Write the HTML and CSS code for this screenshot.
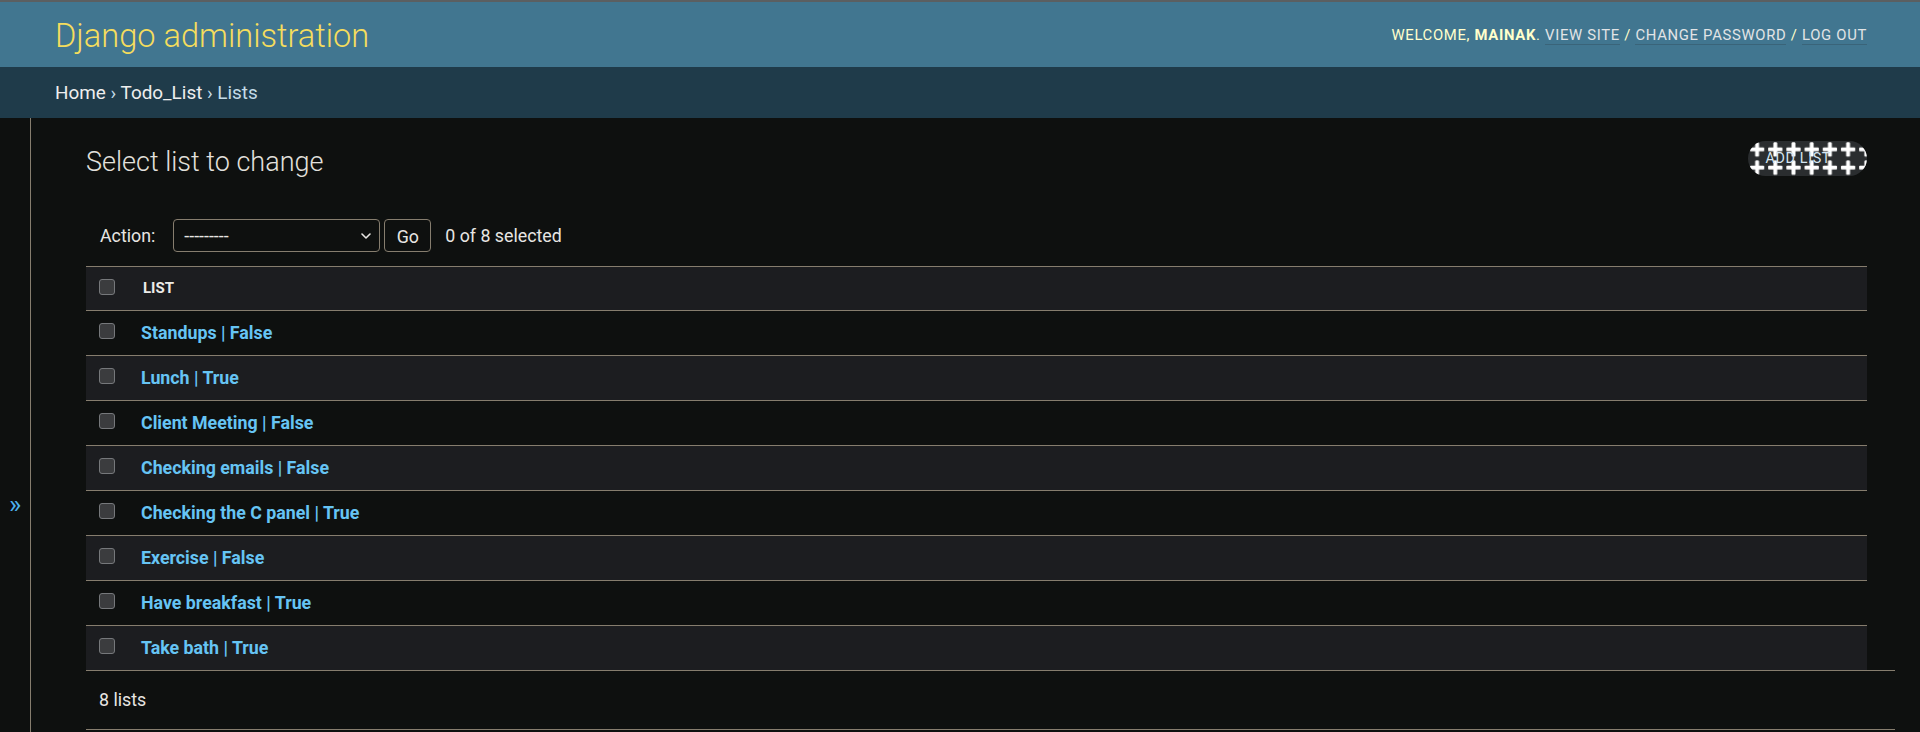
FILE: index.html
```html
<!DOCTYPE html>
<html lang="en">
<head>
<meta charset="utf-8">
<title>Select list to change | Django site admin</title>
<link rel="stylesheet" href="styles.css">
</head>
<body>
<div class="container">
  <header class="header">
    <h1 class="site-name"><a href="#">Django administration</a></h1>
    <div class="user-tools">Welcome, <strong>mainak</strong>. <a href="#">View site</a> / <a href="#">Change password</a> / <a href="#">Log out</a></div>
  </header>
  <nav class="breadcrumbs"><a href="#">Home</a> › <a href="#">Todo_List</a> › Lists</nav>
  <div class="main">
    <button class="toggle-nav" type="button" aria-label="Toggle navigation">»</button>
    <div class="content">
      <div class="page-head">
        <h1 class="page-title">Select list to change</h1>
        <a class="addlink" href="#">
          <svg class="addlink-bg" aria-hidden="true">
            <defs>
              <pattern id="addlink-plus" width="18.2" height="18.2" patternUnits="userSpaceOnUse">
                <path fill="#ffffff" transform="scale(0.0101563)" d="M1600 736v192q0 40-28 68t-68 28h-416v416q0 40-28 68t-68 28h-192q-40 0-68-28t-28-68v-416h-416q-40 0-68-28t-28-68v-192q0-40 28-68t68-28h416v-416q0-40 28-68t68-28h192q40 0 68 28t28 68v416h416q40 0 68 28t28 68z"/>
              </pattern>
            </defs>
            <rect width="100%" height="100%" fill="url(#addlink-plus)"/>
          </svg>
          <span class="addlink-text">Add list</span>
        </a>
      </div>
      <form class="changelist">
        <div class="actions">
          <label class="action-label" for="action">Action:</label>
          <div class="select-wrap">
            <select id="action" class="action-select">
              <option>---------</option>
            </select>
            <svg class="chevron" width="10" height="6" viewBox="0 0 10 6" aria-hidden="true"><path d="M1 1l4 4 4-4" fill="none" stroke="#e8e6e3" stroke-width="1.6" stroke-linecap="round" stroke-linejoin="round"/></svg>
          </div>
          <button class="go" type="button">Go</button>
          <span class="counter">0 of 8 selected</span>
        </div>
        <table class="results">
          <thead>
            <tr>
              <th class="check-cell"><input type="checkbox" class="check" aria-label="Select all"></th>
              <th class="col-head">List</th>
            </tr>
          </thead>
          <tbody>
            <tr><td class="check-cell"><input type="checkbox" class="check"></td><td class="item"><a href="#">Standups | False</a></td></tr>
            <tr><td class="check-cell"><input type="checkbox" class="check"></td><td class="item"><a href="#">Lunch | True</a></td></tr>
            <tr><td class="check-cell"><input type="checkbox" class="check"></td><td class="item"><a href="#">Client Meeting | False</a></td></tr>
            <tr><td class="check-cell"><input type="checkbox" class="check"></td><td class="item"><a href="#">Checking emails | False</a></td></tr>
            <tr><td class="check-cell"><input type="checkbox" class="check"></td><td class="item"><a href="#">Checking the C panel | True</a></td></tr>
            <tr><td class="check-cell"><input type="checkbox" class="check"></td><td class="item"><a href="#">Exercise | False</a></td></tr>
            <tr><td class="check-cell"><input type="checkbox" class="check"></td><td class="item"><a href="#">Have breakfast | True</a></td></tr>
            <tr><td class="check-cell"><input type="checkbox" class="check"></td><td class="item"><a href="#">Take bath | True</a></td></tr>
          </tbody>
        </table>
        <p class="paginator">8 lists</p>
      </form>
    </div>
  </div>
</div>
</body>
</html>
```
FILE: styles.css
```css
* {
  box-sizing: border-box;
}

html,
body {
  margin: 0;
  padding: 0;
}

body {
  background: #0e100f;
  color: #e8e6e3;
  font-family: Roboto, "Liberation Sans", Arial, sans-serif;
  font-size: 18.9px;
}

/* ---------- header ---------- */
.header {
  display: flex;
  justify-content: space-between;
  align-items: center;
  height: 67px;
  padding: 0 53px 0 55px;
  background: #417690;
  border-top: 2px solid #5b5f61;
}

.site-name {
  margin: 2px 0 0;
  font-size: 32.6px;
  font-weight: 300;
  line-height: normal;
}

.site-name a {
  color: #f5dd5d;
  text-decoration: none;
}

.user-tools {
  font-size: 14.85px;
  letter-spacing: 0.68px;
  text-transform: uppercase;
  color: #ffffcc;
}

.user-tools strong {
  font-weight: 700;
}

.user-tools a {
  color: #e1e4e6;
  text-decoration: none;
  border-bottom: 1px solid #3a6479;
}

/* ---------- breadcrumbs ---------- */
.breadcrumbs {
  padding: 15px 55px;
  line-height: 21px;
  background: #1f3b4a;
  color: #c4dce8;
  font-size: 18.9px;
}

.breadcrumbs a {
  color: #eeeeee;
  text-decoration: none;
}

/* ---------- main ---------- */
.main {
  display: flex;
  min-height: 772px;
}

.toggle-nav {
  flex: 0 0 31px;
  display: flex;
  align-items: center;
  justify-content: center;
  padding: 0;
  border: 0;
  border-right: 1px solid #867d6e;
  background: transparent;
  color: #4db2ee;
  font-family: Roboto, "Liberation Sans", Arial, sans-serif;
  font-size: 26px;
}

.content {
  flex: 1;
  min-width: 0;
  padding: 23px 53px 0 55px;
}

.page-head {
  display: flex;
  justify-content: space-between;
  align-items: flex-start;
}

.page-title {
  margin: 6px 0 0;
  font-size: 27px;
  font-weight: 300;
  line-height: 31px;
  color: #e2e0dd;
}

.addlink {
  position: relative;
  display: block;
  height: 35px;
  padding: 4px 36px 0 18px;
  line-height: 26px;
  border-radius: 18px;
  overflow: hidden;
  background: #2a2d2f;
  color: #d6e6f2;
  font-size: 14.3px;
  letter-spacing: 0.65px;
  text-transform: uppercase;
  text-decoration: none;
}

.addlink-bg {
  position: absolute;
  top: 0;
  left: 0;
  width: 100%;
  height: 100%;
}

.addlink-text {
  position: relative;
}

/* ---------- actions ---------- */
.actions {
  display: flex;
  align-items: center;
  height: 33px;
  margin: 41px 0 14px;
  padding-left: 14px;
  font-size: 17.8px;
  color: #e8e6e3;
}

.action-label {
  margin-right: 18px;
}

.select-wrap {
  position: relative;
  width: 207px;
  height: 33px;
}

.action-select {
  appearance: none;
  -webkit-appearance: none;
  width: 100%;
  height: 100%;
  margin: 0;
  padding: 0 28px 0 10px;
  border: 1px solid #867d6e;
  border-radius: 4px;
  background: #0e100f;
  color: #e8e6e3;
  font-family: Roboto, "Liberation Sans", Arial, sans-serif;
  font-size: 17.8px;
}

.chevron {
  position: absolute;
  right: 9px;
  top: 14px;
  pointer-events: none;
}

.go {
  width: 47px;
  height: 33px;
  margin: 0 0 0 4px;
  padding: 2px 0 0;
  border: 1px solid #867d6e;
  border-radius: 4px;
  background: #0e100f;
  color: #e8e6e3;
  font-family: Roboto, "Liberation Sans", Arial, sans-serif;
  font-size: 17.8px;
}

.counter {
  margin-left: 14px;
}

/* ---------- results table ---------- */
.results {
  width: 100%;
  border-collapse: separate;
  border-spacing: 0;
  font-size: 17.8px;
}

.results th,
.results td {
  vertical-align: top;
  text-align: left;
}

.results thead th {
  background: #1c1d20;
  border-top: 1px solid #867d6e;
  border-bottom: 1px solid #867d6e;
}

.results thead .check-cell {
  padding: 12px 15px 15px 13px;
}

.results .col-head {
  padding: 11px 13px 0;
  font-size: 15px;
  font-weight: 700;
  line-height: 21px;
  text-transform: uppercase;
  color: #ecebe8;
}

.results tbody td {
  border-bottom: 1px solid #867d6e;
}

.results tbody tr:nth-child(even) td {
  background: #1c1d20;
}

.results .check-cell {
  width: 44px;
  padding: 12px 15px 16px 13px;
}

.results .item {
  padding: 11px 10px 0 11px;
  line-height: 21px;
}

.results .item a {
  color: #66c4f4;
  font-weight: 700;
  text-decoration: none;
}

.check {
  appearance: none;
  -webkit-appearance: none;
  display: block;
  width: 16px;
  height: 16px;
  margin: 0;
  border: 1px solid #76787b;
  border-radius: 3px;
  background: #3b3c3e;
}

.paginator {
  margin: -1px -28px 0 0;
  padding: 15px 13px;
  line-height: 28px;
  border-top: 1px solid #867d6e;
  border-bottom: 1px solid #867d6e;
  font-size: 17.8px;
  color: #e8e6e3;
}
```
